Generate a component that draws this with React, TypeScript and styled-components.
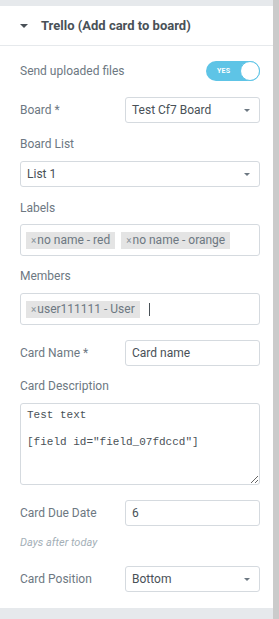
import React from "react";
import styled, { createGlobalStyle } from "styled-components";

const Global = createGlobalStyle`
  html, body { margin: 0; padding: 0; background: #e6e9ec; }
  body { font-family: Roboto, "Noto Sans", Arial, sans-serif; }
  * { box-sizing: border-box; }
`;

const Page = styled.div`
  display: flex;
  width: 279px;
  height: 619px;
  overflow: hidden;
`;

const Main = styled.div`
  flex: 1;
  display: flex;
  flex-direction: column;
  padding-top: 6px;
  background: #e6e9ec;
`;

const Scrollbar = styled.div`
  width: 6px;
  background: #cbcbcb;
`;

const Panel = styled.section`
  background: #fff;
`;

const Header = styled.div`
  height: 40px;
  display: flex;
  align-items: center;
  padding-left: 20px;
  border-bottom: 1px solid #e6e9ec;
  color: #495157;
  font-weight: 700;
  font-size: 13px;
  gap: 13px;
`;

const Caret = styled.span<{ $size?: number; $color?: string }>`
  width: 0;
  height: 0;
  border-left: ${(p) => p.$size ?? 4}px solid transparent;
  border-right: ${(p) => p.$size ?? 4}px solid transparent;
  border-top: ${(p) => Math.round((p.$size ?? 4) * 0.9)}px solid ${(p) => p.$color ?? "#495157"};
`;

const Body = styled.div`
  padding: 0 13px 16px 20px;
  display: flex;
  flex-direction: column;
`;

const Row = styled.div<{ $top: number }>`
  display: flex;
  align-items: center;
  justify-content: space-between;
  margin-top: ${(p) => p.$top}px;
`;

const Block = styled.div<{ $top: number }>`
  display: flex;
  flex-direction: column;
  margin-top: ${(p) => p.$top}px;
`;

const Label = styled.label<{ $gap?: number }>`
  font-size: 12px;
  line-height: 16px;
  color: #6d7882;
  margin-bottom: ${(p) => p.$gap ?? 0}px;
`;

const Hint = styled.div<{ $top: number }>`
  margin-top: ${(p) => p.$top}px;
  font-size: 11px;
  line-height: 16px;
  font-style: italic;
  color: #a4afb7;
`;

const Toggle = styled.div`
  width: 54px;
  height: 20px;
  border-radius: 10px;
  background: #5ec4e6;
  display: flex;
  align-items: center;
  position: relative;
`;

const ToggleText = styled.span`
  font-size: 7px;
  font-weight: 700;
  color: #fff;
  margin-left: 11px;
  letter-spacing: 0.2px;
`;

const Knob = styled.span`
  position: absolute;
  right: 0;
  top: 0;
  width: 20px;
  height: 20px;
  border-radius: 50%;
  background: #fff;
  border: 1px solid #5ec4e6;
`;

const Select = styled.div<{ $w?: number }>`
  width: ${(p) => (p.$w ? `${p.$w}px` : "100%")};
  height: 26px;
  border: 1px solid #d5dadf;
  border-radius: 3px;
  display: flex;
  align-items: center;
  justify-content: space-between;
  padding: 0 9px 0 6px;
  font-size: 12px;
  color: #495157;
`;

const Input = styled.div<{ $w?: number }>`
  width: ${(p) => (p.$w ? `${p.$w}px` : "100%")};
  height: 26px;
  border: 1px solid #d5dadf;
  border-radius: 3px;
  display: flex;
  align-items: center;
  padding: 0 6px;
  font-size: 12px;
  color: #495157;
`;

const MultiBox = styled.div`
  width: 100%;
  height: 32px;
  border: 1px solid #d5dadf;
  border-radius: 3px;
  display: flex;
  align-items: center;
  padding: 0 5px;
  gap: 6px;
`;

const Chip = styled.span`
  height: 17px;
  background: #e4e4e4;
  color: #6d7882;
  font-size: 12px;
  display: flex;
  align-items: center;
  padding: 0 5px 0 5px;
`;

const ChipX = styled.span`
  color: #8a949c;
  font-size: 10px;
  margin-right: 1px;
`;

const Cursor = styled.span`
  width: 1px;
  height: 13px;
  background: #495157;
  margin-left: 3px;
`;

const TextArea = styled.textarea`
  width: 100%;
  height: 82px;
  border: 1px solid #d5dadf;
  border-radius: 3px;
  padding: 5px 6px;
  font-family: "Liberation Mono", "DejaVu Sans Mono", monospace;
  font-size: 11px;
  line-height: 13.5px;
  color: #495157;
  resize: vertical;
  outline: none;
`;

const Bottom = styled.div`
  flex: 1;
  background: #e6e9ec;
`;

export default function App() {
  return (
    <Page>
      <Global />
      <Main>
        <Panel>
          <Header>
            <Caret $size={4} />
            <span>Trello (Add card to board)</span>
          </Header>
          <Body>
            <Row $top={15}>
              <Label>Send uploaded files</Label>
              <Toggle>
                <ToggleText>YES</ToggleText>
                <Knob />
              </Toggle>
            </Row>
            <Row $top={16}>
              <Label>Board *</Label>
              <Select $w={135}>
                <span>Test Cf7 Board</span>
                <Caret $size={3} $color="#6d7882" />
              </Select>
            </Row>
            <Block $top={13}>
              <Label $gap={9}>Board List</Label>
              <Select>
                <span>List 1</span>
                <Caret $size={3} $color="#6d7882" />
              </Select>
            </Block>
            <Block $top={13}>
              <Label $gap={8}>Labels</Label>
              <MultiBox>
                <Chip><ChipX>×</ChipX>no name - red</Chip>
                <Chip><ChipX>×</ChipX>no name - orange</Chip>
              </MultiBox>
            </Block>
            <Block $top={12}>
              <Label $gap={9}>Members</Label>
              <MultiBox>
                <Chip><ChipX>×</ChipX>user111111 - User</Chip>
                <Cursor />
              </MultiBox>
            </Block>
            <Row $top={15}>
              <Label>Card Name *</Label>
              <Input $w={135}>Card name</Input>
            </Row>
            <Block $top={12}>
              <Label $gap={9}>Card Description</Label>
              <TextArea readOnly defaultValue={'Test text\n\n[field id="field_07fdccd"]'} />
            </Block>
            <Row $top={15}>
              <Label>Card Due Date</Label>
              <Input $w={135}>6</Input>
            </Row>
            <Hint $top={9}>Days after today</Hint>
            <Row $top={15}>
              <Label>Card Position</Label>
              <Select $w={135}>
                <span>Bottom</span>
                <Caret $size={3} $color="#6d7882" />
              </Select>
            </Row>
          </Body>
        </Panel>
        <Bottom />
      </Main>
      <Scrollbar />
    </Page>
  );
}
